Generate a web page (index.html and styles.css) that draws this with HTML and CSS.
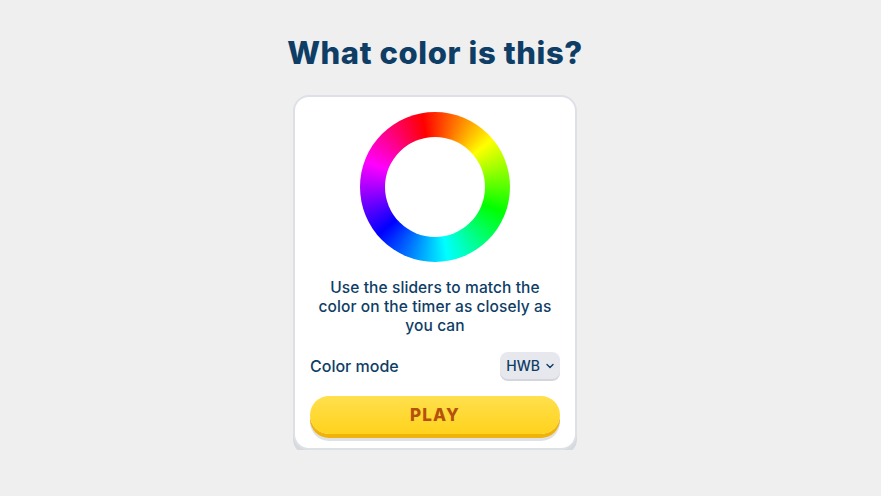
FILE: index.html
```html
<!DOCTYPE html>
<html>
<head>
<meta charset="utf-8">
<link rel="stylesheet" href="styles.css">
</head>
<body>
<main class="page">
  <h1 class="title">What color is this?</h1>
  <section class="card">
    <div class="wheel"><div class="hole"></div></div>
    <p class="hint">Use the sliders to match the color on the timer as closely as you can</p>
    <div class="row">
      <span class="label">Color mode</span>
      <div class="select">HWB <svg width="8" height="6" viewBox="0 0 8 6"><path d="M1 1.5 L4 4.5 L7 1.5" fill="none" stroke="#0e3d66" stroke-width="1.4" stroke-linecap="round" stroke-linejoin="round"/></svg></div>
    </div>
    <button class="play">PLAY</button>
  </section>
</main>
</body>
</html>
```
FILE: styles.css
```css
html, body { margin: 0; padding: 0; }
body {
  background: #efefef;
  font-family: "Inter", "Noto Sans", sans-serif;
  color: #0e3d66;
}
.page {
  width: 870px;
  display: flex;
  flex-direction: column;
  align-items: center;
}
.title {
  margin: 34px 0 0;
  font-size: 31px;
  font-weight: 800;
  line-height: 38px;
  color: #0e3d66;
  letter-spacing: 0.6px;
}
.card {
  margin-top: 23px;
  width: 250px;
  background: #fff;
  border: 2px solid #dde0e5;
  border-radius: 16px;
  box-shadow: 0 5px 0 #d6d9de;
  padding: 15px 15px 14px;
  display: flex;
  flex-direction: column;
  align-items: center;
}
.wheel {
  width: 150px;
  height: 150px;
  border-radius: 50%;
  background: conic-gradient(from -10deg, #ff0000, #ffff00 60deg, #00ff00 120deg, #00ffff 180deg, #0000ff 240deg, #ff00ff 300deg, #ff0000 360deg);
  display: flex;
  align-items: center;
  justify-content: center;
}
.hole {
  width: 100px;
  height: 100px;
  border-radius: 50%;
  background: #fff;
}
.hint {
  margin: 16px 0 0;
  max-width: 238px;
  text-align: center;
  font-size: 15.5px;
  line-height: 19px;
  font-weight: 500;
  letter-spacing: 0.1px;
}
.row {
  margin-top: 17px;
  width: 100%;
  display: flex;
  align-items: center;
  justify-content: space-between;
}
.label {
  font-size: 16px;
  font-weight: 500;
}
.select {
  display: flex;
  align-items: center;
  gap: 6px;
  height: 27px;
  padding: 0 6px 0 6px;
  background: #e6e8ee;
  border-radius: 8px;
  box-shadow: 0 2px 0 #d3d6dc;
  font-size: 14px;
  font-weight: 500;
  color: #0e3d66;
}
.play {
  margin-top: 17px;
  width: 100%;
  height: 38px;
  border: none;
  border-radius: 20px;
  background: linear-gradient(#ffe04d, #ffd21c);
  box-shadow: 0 4px 0 #f0b30a, 0 7px 0 #dfe1e5;
  font-family: inherit;
  font-size: 17px;
  font-weight: 800;
  letter-spacing: 1.2px;
  color: #b5510c;
  padding: 0;
}
```
